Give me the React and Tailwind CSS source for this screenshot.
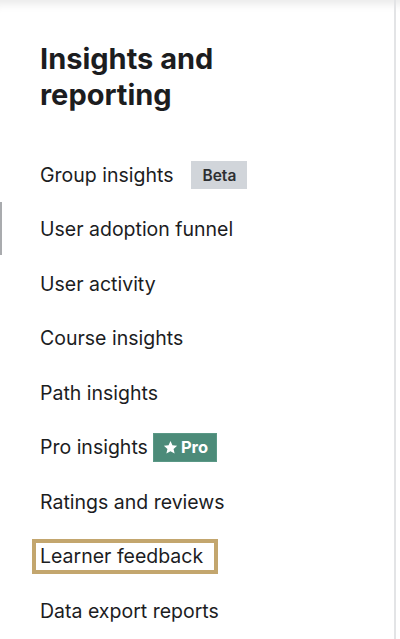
const items = [
  { label: 'Group insights', badge: 'beta' },
  { label: 'User adoption funnel' },
  { label: 'User activity' },
  { label: 'Course insights' },
  { label: 'Path insights' },
  { label: 'Pro insights', badge: 'pro' },
  { label: 'Ratings and reviews' },
  { label: 'Learner feedback', focused: true },
  { label: 'Data export reports' },
];

function StarIcon() {
  return (
    <svg viewBox="0 0 24 24" className="w-[15px] h-[15px]" fill="currentColor">
      <path d="M12 1.5l3.1 7 7.5.7-5.7 5 1.7 7.5L12 17.8l-6.6 3.9 1.7-7.5-5.7-5 7.5-.7z" />
    </svg>
  );
}

function NavItem({ label, badge, focused }) {
  return (
    <div className="h-[54.5px] flex items-center">
      {focused ? (
        <span className="-ml-[8px] pl-[4px] pr-[11px] border-4 border-[#c3a66e] leading-[27px]">{label}</span>
      ) : (
        <span className="leading-[27px]">{label}</span>
      )}
      {badge === 'beta' && (
        <span className="ml-[18px] h-[28px] px-[11px] flex items-center bg-[#d1d5da] text-[#2d2f31] text-[15.5px] font-semibold">
          Beta
        </span>
      )}
      {badge === 'pro' && (
        <span className="ml-[5px] h-[29px] pl-[9px] pr-[8px] flex items-center gap-[3px] bg-[#4c8b79] border border-[#5a9886] text-white text-[16.5px] font-bold">
          <StarIcon />
          Pro
        </span>
      )}
    </div>
  );
}

export default function App() {
  return (
    <div
      className="w-[400px] h-[639px] bg-white overflow-hidden flex text-[#1c1d1f] shadow-[inset_0_12px_10px_-8px_rgba(0,0,0,0.09)]"
      style={{ fontFamily: 'Inter, "Liberation Sans", sans-serif' }}
    >
      <div className="w-[396px] h-full border-r-2 border-[#e3e4e6] flex">
        {/* Rand links */}
        <div className="w-[2px] shrink-0">
          <div className="mt-[202px] h-[53px] bg-[#a9abae]" />
        </div>

        <div className="pl-[38px] pt-[41px] flex flex-col">
          <h2 className="text-[29px] leading-[36px] font-bold">
            Insights and
            <br />
            reporting
          </h2>

          <nav className="mt-[35px] flex flex-col text-[19.5px]">
            {items.map((it) => (
              <NavItem key={it.label} {...it} />
            ))}
          </nav>
        </div>
      </div>
    </div>
  );
}
